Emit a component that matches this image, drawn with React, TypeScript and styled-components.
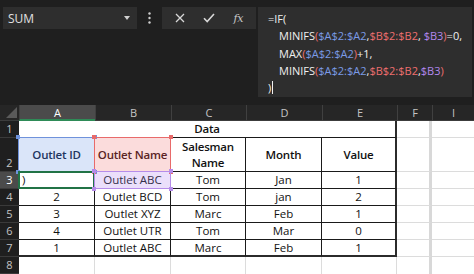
import React from "react";
import styled, { createGlobalStyle } from "styled-components";

const GlobalStyle = createGlobalStyle`
  html, body {
    margin: 0;
    padding: 0;
    background: #1f1f1f;
  }
`;

const Page = styled.div`
  width: 474px;
  height: 274px;
  overflow: hidden;
  background: #1f1f1f;
  font-family: "Open Sans", "Noto Sans", sans-serif;
`;

const TopBar = styled.div`
  height: 105px;
  box-sizing: border-box;
  padding: 7px 2px 0 3px;
  display: flex;
  align-items: flex-start;
`;

const NameBox = styled.div`
  width: 134px;
  height: 22px;
  box-sizing: border-box;
  background: #2e2e2e;
  display: flex;
  align-items: center;
  justify-content: space-between;
  padding: 0 7px 0 5px;
  color: #e0e0e0;
  font-size: 12px;
`;

const Caret = styled.span`
  width: 0;
  height: 0;
  border-left: 3.5px solid transparent;
  border-right: 3.5px solid transparent;
  border-top: 4px solid #d0d0d0;
`;

const Grip = styled.div`
  width: 25px;
  height: 22px;
  display: flex;
  align-items: center;
  justify-content: center;
`;

const ActionBox = styled.div`
  width: 94px;
  height: 22px;
  background: #2e2e2e;
  display: flex;
  align-items: center;
  justify-content: space-around;
  padding: 0 4px;
  box-sizing: border-box;
  margin-right: 2px;
`;

const Fx = styled.span`
  color: #c8c8c8;
  font-family: "DejaVu Serif", "Liberation Serif", serif;
  font-style: italic;
  font-size: 11px;
  letter-spacing: -0.5px;
`;

const Editor = styled.div`
  flex: 1;
  height: 90px;
  background: #2e2e2e;
  box-sizing: border-box;
  padding: 3px 0 0 10px;
  color: #f0f0f0;
  font-size: 11px;
  line-height: 17.3px;
  white-space: pre;
`;

const Line = styled.div<{ $indent?: boolean }>`
  padding-left: ${(p) => (p.$indent ? "11px" : "0")};
`;

const Tok = styled.span<{ $c: "b" | "r" | "p" }>`
  color: ${(p) => ({ b: "#7b9be6", r: "#ee6f6f", p: "#b388ee" }[p.$c])};
`;

const Cursor = styled.span`
  display: inline-block;
  width: 1px;
  height: 13px;
  background: #f0f0f0;
  vertical-align: -2px;
  margin-left: 1px;
`;

const Sheet = styled.div`
  display: grid;
  grid-template-columns: 19px 76px 76px 75px 76px 75px 35px 1fr;
  grid-template-rows: 16px 17px 34px repeat(6, 17px);
  background: #fff;
`;

const Corner = styled.div`
  background: #262626;
  position: relative;
  border-bottom: 1px solid #3c3c3c;
`;

const CornerTri = styled.div`
  position: absolute;
  right: 2px;
  bottom: 2px;
  width: 0;
  height: 0;
  border-left: 11px solid transparent;
  border-bottom: 11px solid #5a5a5a;
`;

const ColHead = styled.div<{ $sel?: boolean }>`
  box-sizing: border-box;
  background: ${(p) => (p.$sel ? "#4b4b4b" : "#262626")};
  color: ${(p) => (p.$sel ? "#ffffff" : "#c4c4c4")};
  border-left: 1px solid #404040;
  border-bottom: ${(p) => (p.$sel ? "2px solid #2e8b57" : "1px solid #3c3c3c")};
  font-size: 11px;
  display: flex;
  align-items: center;
  justify-content: center;
`;

const RowHead = styled.div<{ $sel?: boolean }>`
  box-sizing: border-box;
  background: ${(p) => (p.$sel ? "#4b4b4b" : "#1f1f1f")};
  color: ${(p) => (p.$sel ? "#ffffff" : "#c4c4c4")};
  border-bottom: 1px solid #3a3a3a;
  font-size: 11px;
  display: flex;
  align-items: flex-end;
  justify-content: center;
  padding-bottom: 1px;
`;

type Edge = "table" | "thick" | "grid" | "hidden" | "none";

const edge = (e?: Edge) =>
  e === "thick"
    ? "2px solid #2b2b2b"
    : e === "table"
    ? "1px solid #1a1a1a"
    : e === "hidden"
    ? "3px solid #d8d8d8"
    : e === "none"
    ? "none"
    : "1px solid #dcdcdc";

const Cell = styled.div<{
  $r?: Edge;
  $b?: Edge;
  $span?: number;
  $bg?: string;
  $bold?: boolean;
  $color?: string;
  $left?: boolean;
}>`
  position: relative;
  box-sizing: border-box;
  grid-column: span ${(p) => p.$span || 1};
  background: ${(p) => p.$bg || "#ffffff"};
  border-right: ${(p) => edge(p.$r)};
  border-bottom: ${(p) => edge(p.$b)};
  color: ${(p) => p.$color || "#111111"};
  font-size: 11.5px;
  font-weight: ${(p) => (p.$bold ? 600 : 400)};
  letter-spacing: ${(p) => (p.$bold ? "-0.2px" : "0")};
  line-height: 16px;
  text-align: center;
  display: flex;
  align-items: center;
  justify-content: ${(p) => (p.$left ? "flex-start" : "center")};
  padding-left: ${(p) => (p.$left ? "3px" : "0")};
`;

const Highlight = styled.div<{ $c: string; $w?: number }>`
  position: absolute;
  inset: -1px;
  border: ${(p) => p.$w || 1}px solid ${(p) => p.$c};
  pointer-events: none;
  z-index: 2;
`;

const Handle = styled.span<{ $c: string; $x: "left" | "right"; $y: "top" | "bottom" }>`
  position: absolute;
  width: 4px;
  height: 4px;
  background: ${(p) => p.$c};
  ${(p) => p.$x}: -3px;
  ${(p) => p.$y}: -3px;
`;

const HighlightBox = ({ color, handles = true, width }: { color: string; handles?: boolean; width?: number }) => (
  <Highlight $c={color} $w={width}>
    {handles && (
      <>
        <Handle $c={color} $x="left" $y="top" />
        <Handle $c={color} $x="right" $y="top" />
        <Handle $c={color} $x="left" $y="bottom" />
        <Handle $c={color} $x="right" $y="bottom" />
      </>
    )}
  </Highlight>
);

const BLUE = "#6f92db";
const RED = "#e86a6a";
const PURPLE = "#b58ce9";

const rows = [
  ["2", "Outlet BCD", "Tom", "jan", "2"],
  ["3", "Outlet XYZ", "Marc", "Feb", "1"],
  ["4", "Outlet UTR", "Tom", "Mar", "0"],
  ["1", "Outlet ABC", "Marc", "Feb", "1"],
];

// F and I sit either side of the hidden G:H columns
const Tail = ({ b = "grid" }: { b?: Edge }) => (
  <>
    <Cell $r="hidden" $b={b} />
    <Cell $r="none" $b={b} />
  </>
);

export default function App() {
  return (
    <Page>
      <GlobalStyle />
      <TopBar>
        <NameBox>
          SUM
          <Caret />
        </NameBox>
        <Grip>
          <svg width="3" height="12" viewBox="0 0 3 12">
            <circle cx="1.5" cy="1.5" r="1.2" fill="#cfcfcf" />
            <circle cx="1.5" cy="6" r="1.2" fill="#cfcfcf" />
            <circle cx="1.5" cy="10.5" r="1.2" fill="#cfcfcf" />
          </svg>
        </Grip>
        <ActionBox>
          <svg width="10" height="10" viewBox="0 0 10 10">
            <path d="M1 1L9 9M9 1L1 9" stroke="#d8d8d8" strokeWidth="1.3" />
          </svg>
          <svg width="12" height="10" viewBox="0 0 12 10">
            <path d="M1 5.2L4.2 8.5L11 1" stroke="#d8d8d8" strokeWidth="1.6" fill="none" />
          </svg>
          <Fx>fx</Fx>
        </ActionBox>
        <Editor>
          <Line>=IF(</Line>
          <Line $indent>
            MINIFS<Tok $c="r">(</Tok>
            <Tok $c="b">$A$2:$A2</Tok>,<Tok $c="r">$B$2:$B2</Tok>, <Tok $c="p">$B3</Tok>
            <Tok $c="r">)</Tok>=0,
          </Line>
          <Line $indent>
            MAX<Tok $c="r">(</Tok>
            <Tok $c="b">$A$2:$A2</Tok>
            <Tok $c="r">)</Tok>+1,
          </Line>
          <Line $indent>
            MINIFS<Tok $c="r">(</Tok>
            <Tok $c="b">$A$2:$A2</Tok>,<Tok $c="r">$B$2:$B2</Tok>,<Tok $c="p">$B3</Tok>
            <Tok $c="r">)</Tok>
          </Line>
          <Line>
            )<Cursor />
          </Line>
        </Editor>
      </TopBar>

      <Sheet>
        <Corner>
          <CornerTri />
        </Corner>
        <ColHead $sel>A</ColHead>
        <ColHead>B</ColHead>
        <ColHead>C</ColHead>
        <ColHead>D</ColHead>
        <ColHead>E</ColHead>
        <ColHead>F</ColHead>
        <ColHead>I</ColHead>

        <RowHead>1</RowHead>
        <Cell $span={5} $r="thick" $b="table" $bold>
          Data
        </Cell>
        <Tail />

        <RowHead>2</RowHead>
        <Cell $r="table" $b="table" $bg="#dae5f9" $bold $color="#22355f">
          Outlet ID
          <HighlightBox color={BLUE} />
        </Cell>
        <Cell $r="table" $b="table" $bg="#fbdcdc" $bold $color="#5a2424">
          Outlet Name
          <HighlightBox color={RED} />
        </Cell>
        <Cell $r="table" $b="table" $bold>
          Salesman
          <br />
          Name
        </Cell>
        <Cell $r="table" $b="table" $bold>
          Month
        </Cell>
        <Cell $r="thick" $b="table" $bold>
          Value
        </Cell>
        <Tail />

        <RowHead $sel>3</RowHead>
        <Cell $r="table" $b="table" $left>
          )
          <HighlightBox color="#217346" width={2} handles={false} />
        </Cell>
        <Cell $r="table" $b="table" $bg="#ebdffb" $color="#35304a">
          Outlet ABC
          <HighlightBox color={PURPLE} />
        </Cell>
        <Cell $r="table" $b="table">Tom</Cell>
        <Cell $r="table" $b="table">Jan</Cell>
        <Cell $r="thick" $b="table">1</Cell>
        <Tail />

        {rows.map((r, i) => {
          const b: Edge = i === rows.length - 1 ? "thick" : "table";
          return (
            <React.Fragment key={i}>
              <RowHead>{i + 4}</RowHead>
              <Cell $r="table" $b={b}>{r[0]}</Cell>
              <Cell $r="table" $b={b}>{r[1]}</Cell>
              <Cell $r="table" $b={b}>{r[2]}</Cell>
              <Cell $r="table" $b={b}>{r[3]}</Cell>
              <Cell $r="thick" $b={b}>{r[4]}</Cell>
              <Tail />
            </React.Fragment>
          );
        })}

        <RowHead>8</RowHead>
        <Cell $r="grid" $b="none" />
        <Cell $r="grid" $b="none" />
        <Cell $r="grid" $b="none" />
        <Cell $r="grid" $b="none" />
        <Cell $r="grid" $b="none" />
        <Tail b="none" />
      </Sheet>
    </Page>
  );
}
